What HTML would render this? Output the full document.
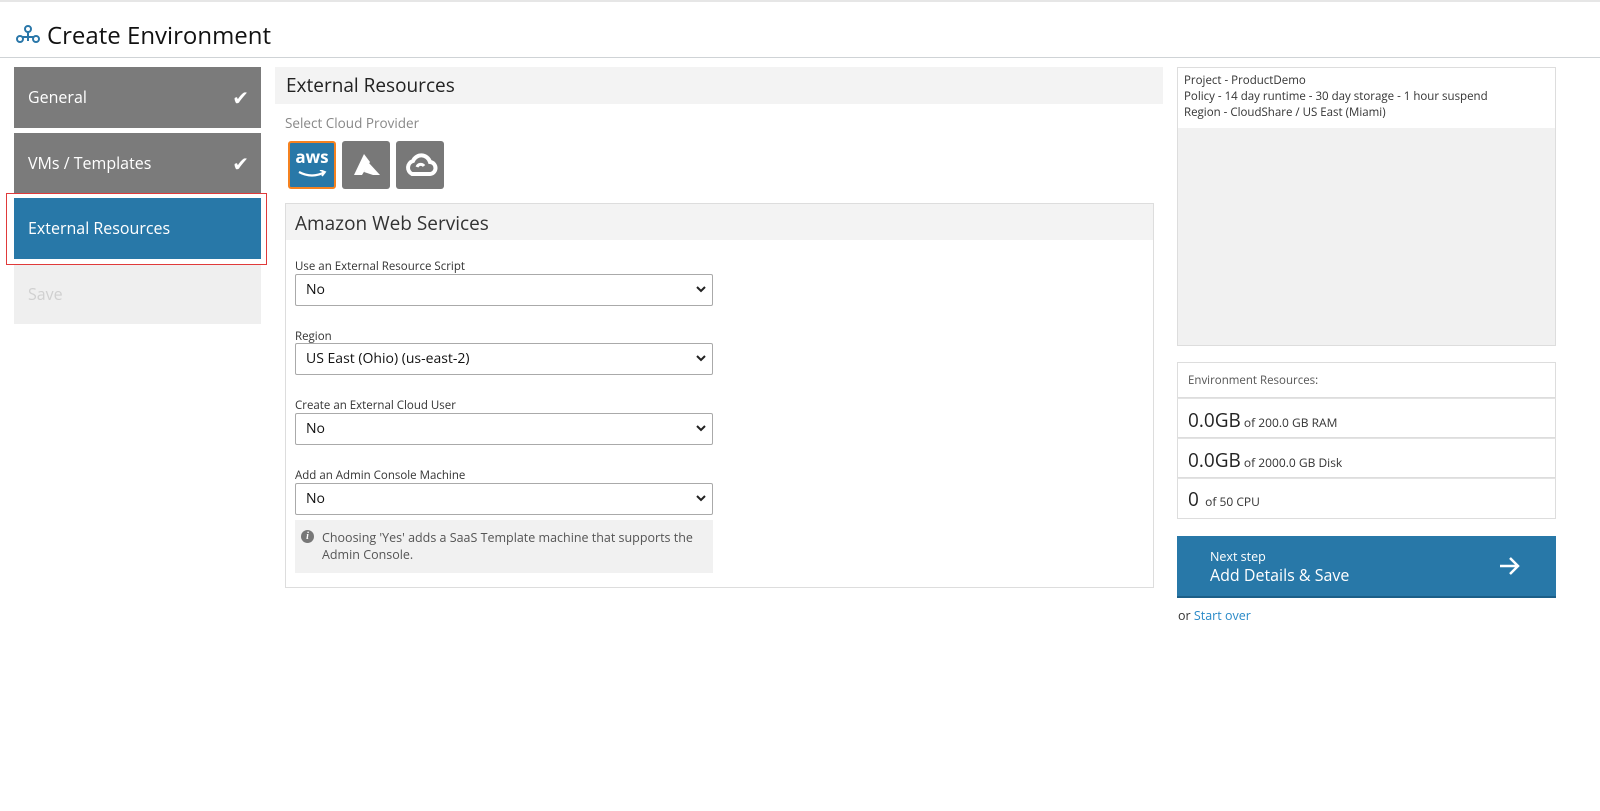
<!DOCTYPE html>
<html><head><meta charset="utf-8"><style>
*{box-sizing:border-box;margin:0;padding:0}
body{width:1600px;height:811px;background:#fff;font-family:"Open Sans","Liberation Sans",sans-serif;color:#222;position:relative;overflow:hidden}
.a{position:absolute}
.nav{position:absolute;left:14px;width:247px;height:61px;background:#7b7b7b;color:#fff;font-size:16px;padding-left:14px;line-height:61px}
.chk{position:absolute;right:12px;top:0;font-size:20px}
.lbl{position:absolute;left:295px;font-size:11.5px;color:#333}
.sel{position:absolute;left:295px;width:418px;height:32px;border:1px solid #aaa;border-radius:2px;background:#fff;font-size:14px;line-height:30px;padding-left:10px;color:#111}
.sel svg{position:absolute;right:6px;top:11px}
.row{position:absolute;left:1177px;width:379px;border:1px solid #ddd;border-top:none;font-size:12px;color:#333;padding-left:10px}
.row b{font-weight:normal;font-size:19px;color:#222}
</style></head><body>
<div class="a" style="left:0;top:0;width:1600px;height:2px;background:#e6e6e6"></div>
<svg class="a" style="left:15px;top:24px" width="26" height="22" viewBox="0 0 26 22" fill="none" stroke="#2a77a9" stroke-width="2"><circle cx="13" cy="5" r="3"/><circle cx="5" cy="15" r="3"/><circle cx="21" cy="15" r="3"/><path d="M13 8v5M13 13l-6 0M13 13l6 0M13 13v4"/></svg>
<div class="a" style="left:47px;top:19px;font-size:24px;color:#111">Create Environment</div>
<div class="a" style="left:0;top:57px;width:1600px;height:1px;background:#cfd3d6"></div>

<div class="nav" style="top:67px">General<span class="chk">✔</span></div>
<div class="nav" style="top:133px">VMs / Templates<span class="chk">✔</span></div>
<div class="a" style="left:6px;top:193px;width:261px;height:72px;border:1.5px solid #e03a3a"></div>
<div class="nav" style="top:198px;background:#2878a8">External Resources</div>
<div class="nav" style="top:265px;height:59px;line-height:59px;background:#efefef;color:#d0d0d0">Save</div>

<div class="a" style="left:275px;top:67px;width:888px;height:37px;background:#f3f3f3;font-size:19px;line-height:37px;padding-left:11px;color:#222">External Resources</div>
<div class="a" style="left:285px;top:114px;font-size:13.5px;color:#888">Select Cloud Provider</div>

<div class="a" style="left:288px;top:141px;width:48px;height:48px;background:#2878a8;border:2.5px solid #f58220;border-radius:3px">
<div style="color:#fff;font-size:17px;text-align:center;line-height:28px;font-weight:bold">aws</div>
<svg style="position:absolute;left:7px;top:27px" width="30" height="10"><path d="M2 2q13 7 26 0" stroke="#fff" stroke-width="2.2" fill="none"/><path d="M23 0l5 2-3 4" stroke="#fff" stroke-width="1.8" fill="none"/></svg></div>
<div class="a" style="left:342px;top:141px;width:48px;height:48px;background:#787878;border-radius:3px">
<svg width="48" height="48"><path d="M22 13L12 34h8l8-13zM27 22l-5 9 9 3h7z" fill="#fff"/></svg></div>
<div class="a" style="left:396px;top:141px;width:48px;height:48px;background:#787878;border-radius:3px">
<svg width="48" height="48" fill="none" stroke="#fff" stroke-width="4"><path d="M16 33h17a6 6 0 0 0 1-12 9 9 0 0 0-17-1 7 7 0 0 0-1 13z"/><path d="M21 26a4 4 0 0 1 7-1" stroke-width="3"/></svg></div>

<div class="a" style="left:285px;top:203px;width:869px;height:385px;border:1px solid #ddd"></div>
<div class="a" style="left:286px;top:204px;width:867px;height:36px;background:#f3f3f3;font-size:19px;line-height:38px;padding-left:9px;color:#333">Amazon Web Services</div>

<div class="lbl" style="top:259px">Use an External Resource Script</div>
<div class="sel" style="top:274px">No<svg width="10" height="8"><path d="M1 1l4 4 4-4" stroke="#222" stroke-width="2" fill="none"/></svg></div>
<div class="lbl" style="top:329px">Region</div>
<div class="sel" style="top:343px">US East (Ohio) (us-east-2)<svg width="10" height="8"><path d="M1 1l4 4 4-4" stroke="#222" stroke-width="2" fill="none"/></svg></div>
<div class="lbl" style="top:398px">Create an External Cloud User</div>
<div class="sel" style="top:413px">No<svg width="10" height="8"><path d="M1 1l4 4 4-4" stroke="#222" stroke-width="2" fill="none"/></svg></div>
<div class="lbl" style="top:468px">Add an Admin Console Machine</div>
<div class="sel" style="top:483px">No<svg width="10" height="8"><path d="M1 1l4 4 4-4" stroke="#222" stroke-width="2" fill="none"/></svg></div>
<div class="a" style="left:295px;top:520px;width:418px;height:53px;background:#f1f1f1;font-size:12.5px;color:#555;padding:9px 10px 0 27px;line-height:17px">Choosing 'Yes' adds a SaaS Template machine that supports the Admin Console.</div>
<div class="a" style="left:301px;top:530px;width:13px;height:13px;border-radius:50%;background:#777;color:#fff;font-size:10px;font-style:italic;font-weight:bold;text-align:center;line-height:13px;font-family:'Liberation Serif',serif">i</div>

<div class="a" style="left:1177px;top:67px;width:379px;height:279px;border:1px solid #ddd;background:#f1f1f1"></div>
<div class="a" style="left:1178px;top:68px;width:377px;height:60px;background:#fff;font-size:11.5px;color:#333;padding:5px 0 0 6px;line-height:16px">Project - ProductDemo<br>Policy - 14 day runtime - 30 day storage - 1 hour suspend<br>Region - CloudShare / US East (Miami)</div>

<div class="row" style="top:362px;height:36px;border-top:1px solid #ddd;line-height:36px;font-size:11.5px;color:#555">Environment Resources:</div>
<div class="row" style="top:398px;height:40px;line-height:42px;border-top:1px solid #e3e3e3"><b>0.0GB</b> of 200.0 GB RAM</div>
<div class="row" style="top:438px;height:40px;line-height:42px;border-top:1px solid #e3e3e3"><b>0.0GB</b> of 2000.0 GB Disk</div>
<div class="row" style="top:478px;height:41px;line-height:40px;border-top:1px solid #e3e3e3"><b>0</b>&nbsp; of 50 CPU</div>

<div class="a" style="left:1177px;top:536px;width:379px;height:62px;background:#2878a8;border-bottom:2px solid #1c5f88;color:#fff">
<div style="position:absolute;left:33px;top:12px;font-size:12.5px">Next step</div>
<div style="position:absolute;left:33px;top:28px;font-size:16px">Add Details &amp; Save</div>
<svg style="position:absolute;left:322px;top:20px" width="22" height="20" fill="none" stroke="#fff" stroke-width="2.5"><path d="M1 10h18M11 2l8 8-8 8"/></svg></div>
<div class="a" style="left:1178px;top:607px;font-size:12.5px;color:#333">or <span style="color:#2a8ac8">Start over</span></div>
</body></html>
